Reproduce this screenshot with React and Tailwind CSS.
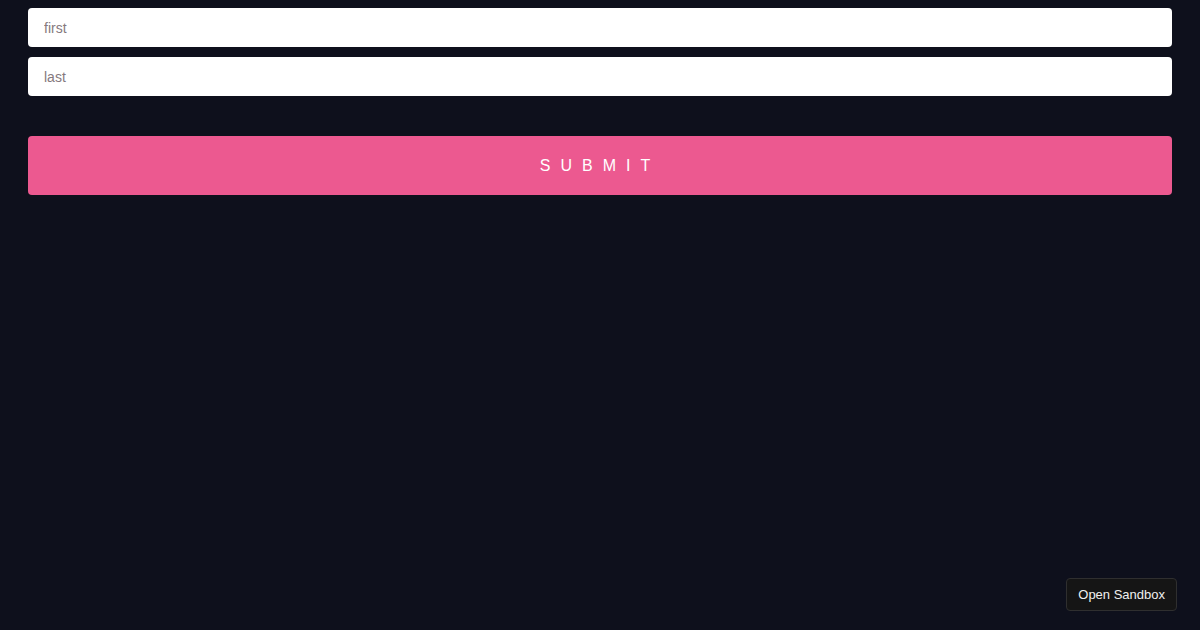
export default function App() {
    return (
        <div className="min-h-screen w-full bg-[#0e101c] font-['Liberation_Sans',Arial,sans-serif]">
            <form className="flex flex-col px-[28px] pt-[8px]" onSubmit={(e) => e.preventDefault()}>
                <input
                    placeholder="first"
                    className="h-[39px] w-full rounded-[4px] bg-white px-[16px] text-[14px] text-black placeholder:text-[#85797e] outline-none"
                />
                <input
                    placeholder="last"
                    className="mt-[10px] h-[39px] w-full rounded-[4px] bg-white px-[16px] text-[14px] text-black placeholder:text-[#85797e] outline-none"
                />
                <button
                    type="submit"
                    className="mt-[40px] h-[59px] w-full rounded-[4px] bg-[#ec5990] text-[16px] uppercase tracking-[10px] text-white"
                >
                    Submit
                </button>
            </form>
            <button className="fixed bottom-[19px] right-[23px] h-[33px] rounded-[4px] border border-[#2f2f2f] bg-[#151515] px-[11px] text-[13px] text-[#f0f0f0]">
                Open Sandbox
            </button>
        </div>
    )
}
